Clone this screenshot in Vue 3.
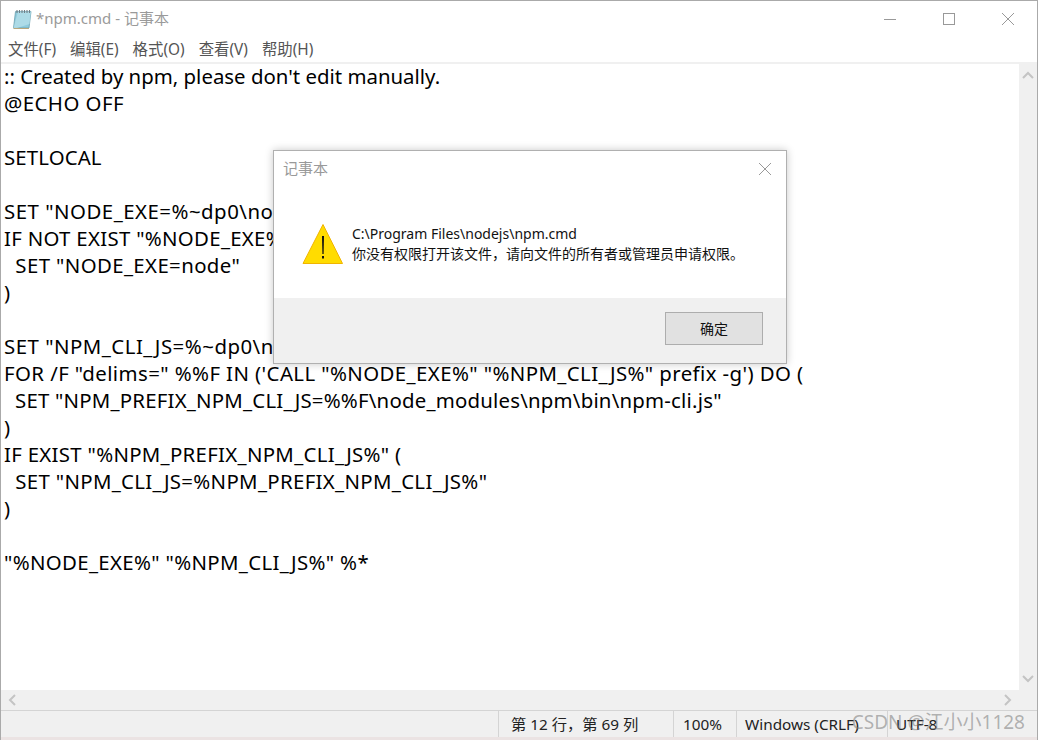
<template>
  <div class="win">
    <header class="titlebar">
      <svg class="appicon" width="22" height="22" viewBox="0 0 22 22">
        <path d="M4.500 3.500 H20 L18 20 H2.500 Z" fill="#8fcbdc" stroke="#6a9fae" stroke-width="0.8"/>
        <path d="M7 3.500 H20 L18.500 16 L6 20 H2.500 Z" fill="#b4dfea" opacity="0.8"/>
        <path d="M2.500 20 H18 L17.800 21 H2.600 Z" fill="#b8a77c"/>
        <path d="M6 2 V5 M8.500 2 V5 M11 2 V5 M13.500 2 V5 M16 2 V5 M18.500 2 V5" stroke="#6f7f86" stroke-width="1.100"/>
      </svg>
      <span class="title">*npm.cmd - 记事本</span>
      <div class="controls">
        <svg width="14" height="14" viewBox="0 0 14 14"><path d="M1 7.500 H13" stroke="#999" fill="none"/></svg>
        <svg width="14" height="14" viewBox="0 0 14 14"><rect x="1.500" y="1.500" width="11" height="11" stroke="#999" fill="none"/></svg>
        <svg width="14" height="14" viewBox="0 0 14 14"><path d="M1 1 L13 13 M13 1 L1 13" stroke="#999" fill="none"/></svg>
      </div>
    </header>
    <nav class="menu">
      <span v-for="m in menus" :key="m">{{ m }}</span>
    </nav>
    <main class="editor">
      <div class="text">
        <div v-for="(l, i) in lines" :key="i" class="line" :style="{ letterSpacing: l[1] + 'px' }">{{ l[0] }}</div>
      </div>
      <div class="vscroll">
        <svg width="12" height="8" viewBox="0 0 12 8"><path d="M1 7 L6 2 L11 7" stroke="#c4c4c4" stroke-width="2" fill="none"/></svg>
        <svg width="12" height="8" viewBox="0 0 12 8"><path d="M1 1 L6 6 L11 1" stroke="#c4c4c4" stroke-width="2" fill="none"/></svg>
      </div>
    </main>
    <div class="hscroll">
      <svg width="8" height="12" viewBox="0 0 8 12"><path d="M7 1 L2 6 L7 11" stroke="#c4c4c4" stroke-width="2" fill="none"/></svg>
      <svg width="8" height="12" viewBox="0 0 8 12"><path d="M1 1 L6 6 L1 11" stroke="#c4c4c4" stroke-width="2" fill="none"/></svg>
    </div>
    <footer class="status">
      <span class="cell pos">第 12 行，第 69 列</span>
      <span class="cell zoom">100%</span>
      <span class="cell eol">Windows (CRLF)</span>
      <span class="cell enc">UTF-8</span>
    </footer>
    <div class="edge"></div>

    <section class="dialog">
      <div class="dlg-title">
        <span>记事本</span>
        <svg width="14" height="14" viewBox="0 0 14 14"><path d="M1 1 L13 13 M13 1 L1 13" stroke="#999" fill="none"/></svg>
      </div>
      <div class="dlg-body">
        <svg class="warn" width="42" height="42" viewBox="0 0 42 42">
          <path d="M21 1.500 L40.500 40.500 H1 Z" fill="#ffdc00" stroke="#f0b400" stroke-linejoin="round"/>
          <path d="M20 13 H22 L21.600 31 H20.400 Z" fill="#111"/>
          <rect x="20" y="33" width="2" height="2.500" fill="#111"/>
        </svg>
        <div class="msg">
          <div>C:\Program Files\nodejs\npm.cmd</div>
          <div>你没有权限打开该文件，请向文件的所有者或管理员申请权限。</div>
        </div>
      </div>
      <div class="dlg-foot"><button class="ok">确定</button></div>
    </section>
    <div class="mark">CSDN @江小小1128</div>
  </div>
</template>

<script setup>
const menus = ['文件(F)', '编辑(E)', '格式(O)', '查看(V)', '帮助(H)']
const lines = [
  [":: Created by npm, please don't edit manually.", 0],
  ['@ECHO OFF', 0.44],
  ['', 0],
  ['SETLOCAL', 0.12],
  ['', 0],
  ['SET "NODE_EXE=%~dp0\\node.exe"', 0.5],
  ['IF NOT EXIST "%NODE_EXE%" (', 0.3],
  ['  SET "NODE_EXE=node"', 0.38],
  [')', 0],
  ['', 0],
  ['SET "NPM_CLI_JS=%~dp0\\node_modules\\npm\\bin\\npm-cli.js"', 0.5],
  ['FOR /F "delims=" %%F IN (\'CALL "%NODE_EXE%" "%NPM_CLI_JS%" prefix -g\') DO (', 0.41],
  ['  SET "NPM_PREFIX_NPM_CLI_JS=%%F\\node_modules\\npm\\bin\\npm-cli.js"', 0.21],
  [')', 0],
  ['IF EXIST "%NPM_PREFIX_NPM_CLI_JS%" (', 0.3],
  ['  SET "NPM_CLI_JS=%NPM_PREFIX_NPM_CLI_JS%"', 0.33],
  [')', 0],
  ['', 0],
  ['"%NODE_EXE%" "%NPM_CLI_JS%" %*', 0.34]
]
</script>

<style>
html, body { margin: 0; background: #fff; }
</style>

<style scoped>
.win {
  position: relative;
  width: 1038px;
  height: 740px;
  box-sizing: border-box;
  border-top: 1px solid #aaa;
  border-left: 1px solid #aaa;
  border-right: 1px solid #aaa;
  display: flex;
  flex-direction: column;
  overflow: hidden;
  background: #fff;
  font-family: "Noto Sans", "Noto Sans CJK SC", sans-serif;
  color: #000;
}
.titlebar {
  height: 37px;
  display: flex;
  align-items: center;
  padding-left: 10px;
  flex: none;
}
.appicon { margin-right: 3px; margin-top: -1px; }
.title { font-size: 15px; color: #9a9a9a; margin-top: -4px; }
.controls {
  margin-left: auto;
  display: flex;
  gap: 45px;
  padding-right: 22px;
  margin-top: -1px;
}
.menu {
  height: 24px;
  display: flex;
  gap: 14px;
  padding-left: 7px;
  font-size: 15.400px;
  line-height: 24px;
  color: #555;
  flex: none;
  border-bottom: 2px solid #f0f0f0;
  white-space: nowrap;
}
.editor {
  flex: 1;
  min-height: 0;
  display: flex;
}
.text {
  flex: 1;
  padding: 1px 0 0 3px;
  font-size: 20.400px;
  line-height: 27px;
  white-space: pre;
  overflow: hidden;
  margin-top: -2px;
}
.line { height: 27px; }
.vscroll {
  width: 18px;
  background: #f0f0f0;
  flex: none;
  display: flex;
  flex-direction: column;
  justify-content: space-between;
  align-items: center;
  padding: 7px 0;
  box-sizing: border-box;
}
.hscroll {
  height: 20px;
  background: #f0f0f0;
  flex: none;
  display: flex;
  justify-content: space-between;
  align-items: center;
  padding: 0 25px 0 7px;
  border-bottom: 1px solid #d4d4d4;
}
.status {
  height: 26px;
  background: #f0f0f0;
  flex: none;
  display: flex;
  padding-left: 497px;
  font-size: 15.300px;
  line-height: 27px;
  color: #222;
  white-space: nowrap;
}
.cell {
  box-sizing: border-box;
  border-left: 1px solid #d4d4d4;
  display: block;
}
.pos { width: 175px; padding-left: 12px; }
.zoom { width: 63px; padding-left: 9px; }
.eol { width: 151px; padding-left: 8px; }
.enc { width: 150px; padding-left: 8px; }
.edge { height: 3px; background: #ebe3e3; flex: none; margin-left: -1px; margin-right: -1px; }
.dialog {
  position: absolute;
  left: 272px;
  top: 149px;
  width: 514px;
  height: 214px;
  box-sizing: border-box;
  border: 1px solid #b0b0b0;
  background: #fff;
  box-shadow: 0 0 8px rgba(0, 0, 0, 0.22);
  display: flex;
  flex-direction: column;
}
.dlg-title {
  height: 36px;
  display: flex;
  align-items: center;
  justify-content: space-between;
  padding: 0 14px 0 9px;
  font-size: 15px;
  line-height: 20px;
  color: #999;
  flex: none;
}
.dlg-title span { margin-top: -2px; }
.dlg-body {
  flex: 1;
  display: flex;
  align-items: flex-start;
  padding: 35px 0 0 28px;
  gap: 8px;
}
.warn { flex: none; margin-top: 1px; }
.msg {
  font-size: 14px;
  line-height: 20px;
  color: #111;
  white-space: nowrap;
  margin-top: 2px;
}
.dlg-foot {
  height: 65px;
  background: #f0f0f0;
  flex: none;
  display: flex;
  justify-content: flex-end;
  align-items: flex-start;
  padding: 14px 23px 0 0;
  box-sizing: border-box;
}
.ok {
  width: 98px;
  height: 33px;
  background: #e1e1e1;
  border: 1px solid #adadad;
  font: inherit;
  font-size: 14px;
  line-height: 30px;
  color: #111;
  padding: 0;
}
.mark {
  position: absolute;
  right: 12px;
  top: 706px;
  font-size: 19px;
  color: rgba(120, 120, 120, 0.55);
  white-space: nowrap;
}
</style>
